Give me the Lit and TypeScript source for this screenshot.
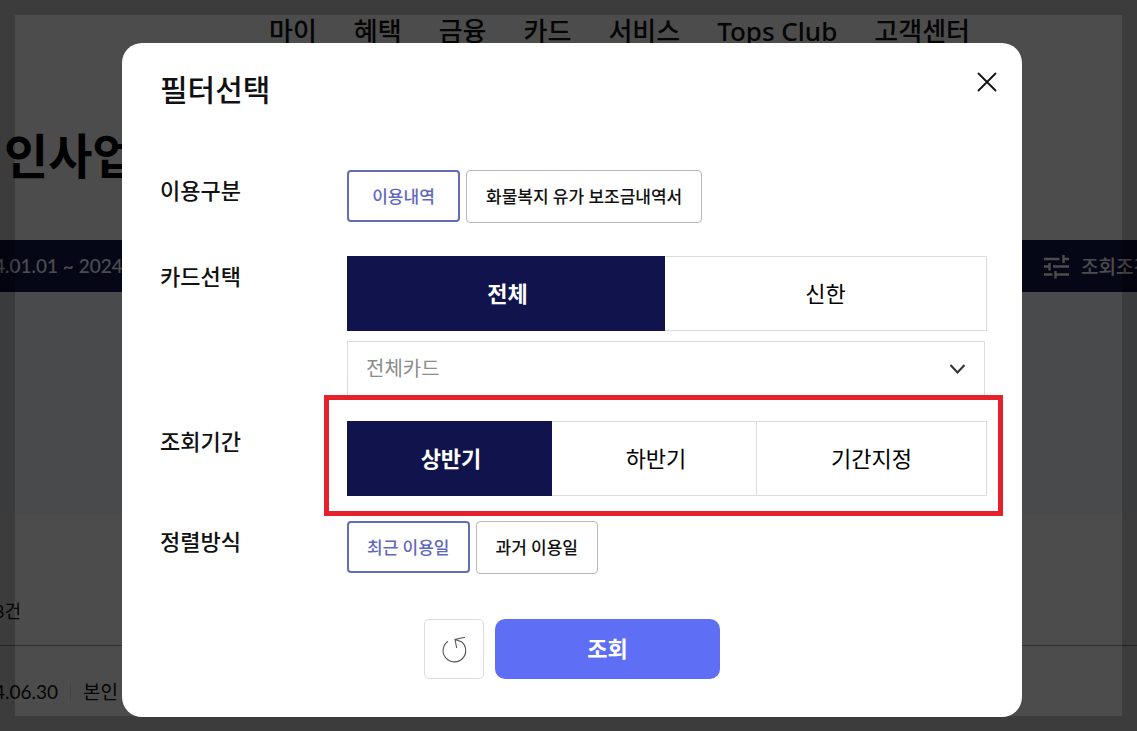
import { LitElement, html, css } from "lit";
import { customElement, state } from "lit/decorators.js";

const NAV = ["마이", "혜택", "금융", "카드", "서비스", "Tops Club", "고객센터"];

@customElement("usage-page")
class UsagePage extends LitElement {
  static styles = css`
    :host {
      display: block;
      overflow: hidden;
      background: #fff;
      color: #111;
    }
    .nav {
      display: flex;
      gap: 37px;
      height: 92px;
      padding: 12px 0 0 269px;
      font-family: "Noto Sans", "Noto Sans CJK KR", sans-serif;
    }
    .nav a {
      color: inherit;
      text-decoration: none;
      white-space: nowrap;
      font-size: 26px;
      font-weight: 500;
      line-height: 38px;
    }
    .title {
      margin: 0;
      padding: 16px 0 48px 4px;
      white-space: nowrap;
      font-size: 48px;
      font-weight: 700;
      line-height: 72px;
      color: #000;
    }
    .bar {
      display: flex;
      justify-content: space-between;
      height: 52px;
      background: #11144c;
      color: #fff;
      font-size: 19px;
      line-height: 52px;
      white-space: nowrap;
    }
    .range {
      margin-left: -6px;
      font-weight: 500;
    }
    .cond {
      display: flex;
      align-items: center;
      gap: 12px;
      width: 94px;
      padding: 2px 0 0;
      border: 0;
      background: none;
      color: inherit;
      font: inherit;
      font-weight: 500;
      white-space: nowrap;
    }
    .cond svg {
      flex: none;
    }
    .band {
      height: 221px;
      background: #f6f8fc;
    }
    .count {
      margin: 0;
      padding: 82px 0 18px;
      border-bottom: 1px solid #999;
      font-size: 18px;
      line-height: 32px;
    }
    .count span,
    .entry span:first-child {
      margin-left: -6px;
    }
    .entry {
      display: flex;
      align-items: center;
      gap: 12px;
      padding-top: 30px;
      font-size: 19px;
      line-height: 32px;
      white-space: nowrap;
    }
    .sep {
      width: 1px;
      height: 18px;
      background: #ddd;
    }
  `;

  render() {
    return html`
      <nav class="nav">${NAV.map((n) => html`<a href="#">${n}</a>`)}</nav>
      <h1 class="title">인사업자</h1>
      <div class="bar">
        <span class="range">4.01.01 ~ 2024.</span>
        <button class="cond">
          <svg width="26" height="26" viewBox="0 0 26 26" fill="none" stroke="currentColor" stroke-width="2.4">
            <path d="M1 5h15.500M20.500 5H26M20.500 1v8M1 12.500h5M6.500 9v7.500M10 12.500h16M1 20.500h8.500M12.500 17v7.500M13 20.500h13" />
          </svg>
          조회조건
        </button>
      </div>
      <div class="band"></div>
      <p class="count"><span>8건</span></p>
      <div class="entry">
        <span>4.06.30</span><i class="sep"></i><span>본인</span>
      </div>
    `;
  }
}

@customElement("filter-dialog")
class FilterDialog extends LitElement {
  @state() private kind = 0;
  @state() private card = 0;
  @state() private period = 0;
  @state() private order = 0;

  static styles = css`
    :host {
      display: block;
      box-sizing: border-box;
      padding: 24px 35px 38px 38px;
      border-radius: 20px;
      background: #fff;
      color: #111;
    }
    button,
    select {
      font-family: inherit;
      cursor: pointer;
    }
    .head {
      display: flex;
      justify-content: space-between;
      align-items: flex-start;
      margin-bottom: 59px;
    }
    .heading {
      margin: 0;
      font-size: 30px;
      font-weight: 500;
      line-height: 44px;
    }
    .close {
      display: grid;
      place-items: center;
      width: 28px;
      height: 30px;
      margin-right: -14px;
      padding: 0;
      border: 0;
      background: none;
      color: #111;
    }
    .rows {
      display: grid;
      grid-template-columns: 187px minmax(0, 1fr);
    }
    .label {
      font-size: 22px;
      font-weight: 500;
      line-height: 42px;
    }
    .chips {
      display: flex;
      align-items: flex-start;
      gap: 6px;
    }
    .chip {
      height: 53px;
      padding: 0 19px 2px;
      border: 1px solid #b8b8b8;
      border-radius: 4px;
      background: #fff;
      color: #111;
      font-size: 17px;
      font-weight: 500;
      white-space: nowrap;
    }
    .chip.on {
      min-width: 113px;
      height: 52px;
      padding: 0 18px 1px;
      border: 2px solid #636db5;
      color: #5f68bd;
    }
    .usage {
      margin-bottom: 33px;
    }
    .tabs {
      display: grid;
      grid-template-columns: 205fr 205fr 230fr;
      position: relative;
    }
    .tabs.pair {
      grid-template-columns: 318fr 322fr;
    }
    .tab {
      height: 75px;
      padding: 0 0 3px 4px;
      border: 1px solid #dcdcdc;
      border-left-width: 0;
      background: #fff;
      color: #000;
      font-size: 22px;
    }
    .tab:last-of-type {
      padding-left: 0;
    }
    .tab.on {
      border-color: #11144c;
      background: #11144c;
      color: #fff;
      font-weight: 700;
    }
    .picker {
      display: grid;
      align-items: center;
      margin: 10px 2px 23px 0;
    }
    .picker > * {
      grid-area: 1 / 1;
    }
    .select {
      appearance: none;
      width: 100%;
      height: 57px;
      padding: 0 18px 3px;
      border: 1px solid #dcdcdc;
      border-radius: 0;
      background: #fff;
      color: #8c8c8c;
      font-size: 20px;
    }
    .chevron {
      justify-self: end;
      margin: 0 18px 2px 0;
      pointer-events: none;
    }
    .period {
      margin-bottom: 25px;
    }
    .mark {
      position: absolute;
      inset: -26px -16px -20px -23px;
      border: 5px solid #e62129;
      pointer-events: none;
    }
    .foot {
      display: flex;
      justify-content: center;
      gap: 11px;
      margin: 45px 0 0 -3px;
    }
    .reset {
      display: grid;
      place-items: center;
      width: 60px;
      height: 60px;
      padding: 0;
      border: 1px solid #dcdcdc;
      border-radius: 5px;
      background: #fff;
      color: #555;
    }
    .submit {
      width: 225px;
      height: 60px;
      padding: 0 0 4px;
      border: 0;
      border-radius: 10px;
      background: #5f6ff5;
      color: #fff;
      font-size: 22px;
      font-weight: 700;
    }
  `;

  private options(cls: string, items: string[], current: number, pick: (i: number) => void) {
    return items.map(
      (text, i) => html`<button
        type="button"
        class="${cls}${i === current ? " on" : ""}"
        aria-pressed=${i === current}
        @click=${() => pick(i)}
      >${text}</button>`
    );
  }

  render() {
    return html`
      <div class="head">
        <h2 class="heading">필터선택</h2>
        <button class="close" aria-label="닫기">
          <svg width="20" height="20" viewBox="0 0 20 20" fill="none" stroke="currentColor" stroke-width="1.8" stroke-linecap="round">
            <path d="M1.500 1.500l17 17M18.500 1.500l-17 17" />
          </svg>
        </button>
      </div>
      <div class="rows">
        <div class="label" id="kind">이용구분</div>
        <div class="chips usage" role="group" aria-labelledby="kind">
          ${this.options("chip", ["이용내역", "화물복지 유가 보조금내역서"], this.kind, (i) => (this.kind = i))}
        </div>
        <label class="label" id="card" for="cards">카드선택</label>
        <div>
          <div class="tabs pair" role="group" aria-labelledby="card">
            ${this.options("tab", ["전체", "신한"], this.card, (i) => (this.card = i))}
          </div>
          <div class="picker">
            <select class="select" id="cards"><option>전체카드</option></select>
            <svg class="chevron" width="18" height="12" viewBox="0 0 18 12" fill="none" stroke="#333" stroke-width="2">
              <path d="M1.500 2l7 7.500L15.500 2" />
            </svg>
          </div>
        </div>
        <div class="label" id="period">조회기간</div>
        <div class="tabs period" role="group" aria-labelledby="period">
          ${this.options("tab", ["상반기", "하반기", "기간지정"], this.period, (i) => (this.period = i))}
          <span class="mark"></span>
        </div>
        <div class="label" id="order">정렬방식</div>
        <div class="chips" role="group" aria-labelledby="order">
          ${this.options("chip", ["최근 이용일", "과거 이용일"], this.order, (i) => (this.order = i))}
        </div>
      </div>
      <div class="foot">
        <button class="reset" aria-label="초기화">
          <svg width="26" height="28" viewBox="0 0 26 28" fill="none" stroke="currentColor" stroke-width="1.100">
            <path d="M7 6.300A11.300 11.300 0 1 0 20.500 6.800L14 4.500M24 2.300L14 4.500l1.700 8.500" />
          </svg>
        </button>
        <button class="submit">조회</button>
      </div>
    `;
  }
}

@customElement("app-root")
class AppRoot extends LitElement {
  static styles = css`
    :host {
      display: grid;
      grid-template-columns: minmax(0, 1fr);
      min-height: 100vh;
      overflow: hidden;
      font-family: Lato, "Noto Sans CJK KR", sans-serif;
    }
    .layer {
      grid-area: 1 / 1;
    }
    .shade {
      z-index: 1;
      border: 15px solid rgba(0, 0, 0, 0.2);
      background: rgba(0, 0, 0, 0.7);
      background-clip: border-box;
    }
    .dialog {
      z-index: 2;
      align-self: start;
      margin: 43px 115px 14px 122px;
    }
  `;

  render() {
    return html`
      <usage-page class="layer"></usage-page>
      <div class="layer shade"></div>
      <filter-dialog class="layer dialog"></filter-dialog>
    `;
  }
}
